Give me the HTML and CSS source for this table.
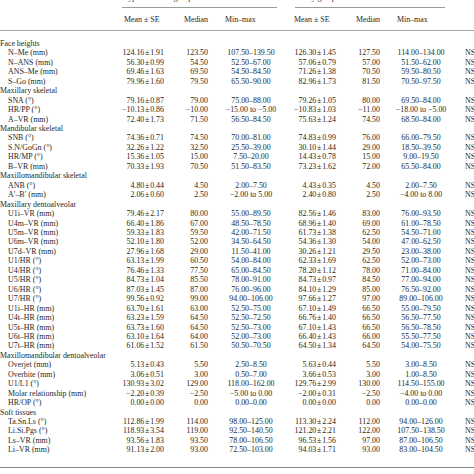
FILE: index.html
```html
<!DOCTYPE html>
<html>
<head>
<meta charset="utf-8">
<link rel="stylesheet" href="styles.css">
</head>
<body>
<div class="page">
<table class="tbl">
<colgroup>
<col class="c-lab"><col class="c-mean"><col class="c-med"><col class="c-rng"><col class="c-mean2"><col class="c-med"><col class="c-rng2"><col class="c-p">
</colgroup>
<thead>
<tr class="grp">
<th></th>
<th colspan="3"><div class="gline g1">Typical normal group</div></th>
<th colspan="3"><div class="gline g2">Study group</div></th>
<th></th>
</tr>
<tr class="cols">
<th></th>
<th class="h-mean">Mean ± SE</th>
<th class="h-med">Median</th>
<th class="h-rng">Min–max</th>
<th class="h-mean">Mean ± SE</th>
<th class="h-med">Median</th>
<th class="h-rng">Min–max</th>
<th class="h-p"></th>
</tr>
</thead>
<tbody>
<tr class="sec first"><td colspan="8">Face heights</td></tr>
<tr><td class="lab">N–Me (mm)</td><td class="m">124.16 ± 1.91</td><td class="md">123.50</td><td class="r">107.50–139.50</td><td class="m">126.30 ± 1.45</td><td class="md">127.50</td><td class="r">114.00–134.00</td><td class="p">NS</td></tr>
<tr><td class="lab">N–ANS (mm)</td><td class="m">56.30 ± 0.99</td><td class="md">54.50</td><td class="r">52.50–67.00</td><td class="m">57.06 ± 0.79</td><td class="md">57.00</td><td class="r">51.50–62.00</td><td class="p">NS</td></tr>
<tr><td class="lab">ANS–Me (mm)</td><td class="m">69.46 ± 1.63</td><td class="md">69.50</td><td class="r">54.50–84.50</td><td class="m">71.26 ± 1.38</td><td class="md">70.50</td><td class="r">59.50–80.50</td><td class="p">NS</td></tr>
<tr><td class="lab">S–Go (mm)</td><td class="m">79.96 ± 1.60</td><td class="md">79.50</td><td class="r">65.50–90.00</td><td class="m">82.96 ± 1.73</td><td class="md">81.50</td><td class="r">70.50–97.50</td><td class="p">NS</td></tr>
<tr class="sec"><td colspan="8">Maxillary skeletal</td></tr>
<tr><td class="lab">SNA (°)</td><td class="m">79.16 ± 0.87</td><td class="md">79.00</td><td class="r">75.00–88.00</td><td class="m">79.26 ± 1.05</td><td class="md">80.00</td><td class="r">69.50–84.00</td><td class="p">NS</td></tr>
<tr><td class="lab">HR/PP (°)</td><td class="m">−10.13 ± 0.86</td><td class="md">−10.00</td><td class="r">−15.00 to −5.00</td><td class="m">−10.83 ± 1.03</td><td class="md">−11.00</td><td class="r">−18.00 to −5.00</td><td class="p">NS</td></tr>
<tr><td class="lab">A–VR (mm)</td><td class="m">72.40 ± 1.73</td><td class="md">71.50</td><td class="r">56.50–84.50</td><td class="m">75.63 ± 1.24</td><td class="md">74.50</td><td class="r">68.50–84.00</td><td class="p">NS</td></tr>
<tr class="sec"><td colspan="8">Mandibular skeletal</td></tr>
<tr><td class="lab">SNB (°)</td><td class="m">74.36 ± 0.71</td><td class="md">74.50</td><td class="r">70.00–81.00</td><td class="m">74.83 ± 0.99</td><td class="md">76.00</td><td class="r">66.00–79.50</td><td class="p">NS</td></tr>
<tr><td class="lab">S.N/GoGn (°)</td><td class="m">32.26 ± 1.22</td><td class="md">32.50</td><td class="r">25.50–39.00</td><td class="m">30.10 ± 1.44</td><td class="md">29.00</td><td class="r">18.50–39.50</td><td class="p">NS</td></tr>
<tr><td class="lab">HR/MP (°)</td><td class="m">15.36 ± 1.05</td><td class="md">15.00</td><td class="r">7.50–20.00</td><td class="m">14.43 ± 0.78</td><td class="md">15.00</td><td class="r">9.00–19.50</td><td class="p">NS</td></tr>
<tr><td class="lab">B–VR (mm)</td><td class="m">70.33 ± 1.93</td><td class="md">70.50</td><td class="r">51.50–83.50</td><td class="m">73.23 ± 1.62</td><td class="md">72.00</td><td class="r">65.50–84.00</td><td class="p">NS</td></tr>
<tr class="sec"><td colspan="8">Maxillomandibular skeletal</td></tr>
<tr><td class="lab">ANB (°)</td><td class="m">4.80 ± 0.44</td><td class="md">4.50</td><td class="r">2.00–7.50</td><td class="m">4.43 ± 0.35</td><td class="md">4.50</td><td class="r">2.00–7.50</td><td class="p">NS</td></tr>
<tr><td class="lab">A′–B′ (mm)</td><td class="m">2.06 ± 0.60</td><td class="md">2.50</td><td class="r">−2.00 to 5.00</td><td class="m">2.40 ± 0.80</td><td class="md">2.50</td><td class="r">−4.00 to 8.00</td><td class="p">NS</td></tr>
<tr class="sec"><td colspan="8">Maxillary dentoalveolar</td></tr>
<tr><td class="lab">U1i–VR (mm)</td><td class="m">79.46 ± 2.17</td><td class="md">80.00</td><td class="r">55.00–89.50</td><td class="m">82.56 ± 1.46</td><td class="md">83.00</td><td class="r">76.00–93.50</td><td class="p">NS</td></tr>
<tr><td class="lab">U4m–VR (mm)</td><td class="m">66.40 ± 1.86</td><td class="md">67.00</td><td class="r">48.50–78.50</td><td class="m">68.96 ± 1.40</td><td class="md">69.00</td><td class="r">61.00–78.50</td><td class="p">NS</td></tr>
<tr><td class="lab">U5m–VR (mm)</td><td class="m">59.33 ± 1.83</td><td class="md">59.50</td><td class="r">42.00–71.50</td><td class="m">61.73 ± 1.38</td><td class="md">62.50</td><td class="r">54.50–71.00</td><td class="p">NS</td></tr>
<tr><td class="lab">U6m–VR (mm)</td><td class="m">52.10 ± 1.80</td><td class="md">52.00</td><td class="r">34.50–64.50</td><td class="m">54.36 ± 1.30</td><td class="md">54.00</td><td class="r">47.00–62.50</td><td class="p">NS</td></tr>
<tr><td class="lab">U7d–VR (mm)</td><td class="m">27.96 ± 1.68</td><td class="md">29.00</td><td class="r">11.50–41.00</td><td class="m">30.26 ± 1.21</td><td class="md">29.50</td><td class="r">23.00–38.00</td><td class="p">NS</td></tr>
<tr><td class="lab">U1/HR (°)</td><td class="m">63.13 ± 1.99</td><td class="md">60.50</td><td class="r">54.00–84.00</td><td class="m">62.33 ± 1.69</td><td class="md">62.50</td><td class="r">52.00–73.00</td><td class="p">NS</td></tr>
<tr><td class="lab">U4/HR (°)</td><td class="m">76.46 ± 1.33</td><td class="md">77.50</td><td class="r">65.00–84.50</td><td class="m">78.20 ± 1.12</td><td class="md">78.00</td><td class="r">71.00–84.00</td><td class="p">NS</td></tr>
<tr><td class="lab">U5/HR (°)</td><td class="m">84.73 ± 1.04</td><td class="md">85.50</td><td class="r">78.00–91.00</td><td class="m">84.73 ± 0.97</td><td class="md">84.50</td><td class="r">77.00–94.00</td><td class="p">NS</td></tr>
<tr><td class="lab">U6/HR (°)</td><td class="m">87.03 ± 1.45</td><td class="md">87.00</td><td class="r">76.00–96.00</td><td class="m">84.10 ± 1.29</td><td class="md">85.00</td><td class="r">76.50–92.00</td><td class="p">NS</td></tr>
<tr><td class="lab">U7/HR (°)</td><td class="m">99.56 ± 0.92</td><td class="md">99.00</td><td class="r">94.00–106.00</td><td class="m">97.66 ± 1.27</td><td class="md">97.00</td><td class="r">89.00–106.00</td><td class="p">NS</td></tr>
<tr><td class="lab">U1i–HR (mm)</td><td class="m">63.70 ± 1.61</td><td class="md">63.00</td><td class="r">52.50–75.00</td><td class="m">67.10 ± 1.49</td><td class="md">66.50</td><td class="r">55.00–79.50</td><td class="p">NS</td></tr>
<tr><td class="lab">U4t–HR (mm)</td><td class="m">63.23 ± 1.59</td><td class="md">64.50</td><td class="r">52.50–72.50</td><td class="m">66.76 ± 1.40</td><td class="md">66.50</td><td class="r">56.50–77.50</td><td class="p">NS</td></tr>
<tr><td class="lab">U5t–HR (mm)</td><td class="m">63.73 ± 1.60</td><td class="md">64.50</td><td class="r">52.50–73.00</td><td class="m">67.10 ± 1.43</td><td class="md">66.50</td><td class="r">56.50–78.50</td><td class="p">NS</td></tr>
<tr><td class="lab">U6t–HR (mm)</td><td class="m">63.10 ± 1.64</td><td class="md">64.00</td><td class="r">52.00–73.00</td><td class="m">66.40 ± 1.43</td><td class="md">66.00</td><td class="r">55.50–77.50</td><td class="p">NS</td></tr>
<tr><td class="lab">U7t–HR (mm)</td><td class="m">61.06 ± 1.52</td><td class="md">61.50</td><td class="r">50.50–70.50</td><td class="m">64.50 ± 1.34</td><td class="md">64.50</td><td class="r">54.00–75.50</td><td class="p">NS</td></tr>
<tr class="sec"><td colspan="8">Maxillomandibular dentoalveolar</td></tr>
<tr><td class="lab">Overjet (mm)</td><td class="m">5.13 ± 0.43</td><td class="md">5.50</td><td class="r">2.50–8.50</td><td class="m">5.63 ± 0.44</td><td class="md">5.50</td><td class="r">3.00–8.50</td><td class="p">NS</td></tr>
<tr><td class="lab">Overbite (mm)</td><td class="m">3.06 ± 0.51</td><td class="md">3.00</td><td class="r">0.50–7.00</td><td class="m">3.66 ± 0.53</td><td class="md">3.00</td><td class="r">1.00–8.50</td><td class="p">NS</td></tr>
<tr><td class="lab">U1/L1 (°)</td><td class="m">130.93 ± 3.02</td><td class="md">129.00</td><td class="r">118.00–162.00</td><td class="m">129.76 ± 2.99</td><td class="md">130.00</td><td class="r">114.50–155.00</td><td class="p">NS</td></tr>
<tr><td class="lab">Molar relationship (mm)</td><td class="m">−2.20 ± 0.39</td><td class="md">−2.50</td><td class="r">−5.00 to 0.00</td><td class="m">−2.00 ± 0.31</td><td class="md">−2.50</td><td class="r">−4.00 to 0.00</td><td class="p">NS</td></tr>
<tr><td class="lab">HR/OP (°)</td><td class="m">0.00 ± 0.00</td><td class="md">0.00</td><td class="r">0.00–0.00</td><td class="m">0.00 ± 0.00</td><td class="md">0.00</td><td class="r">0.00–0.00</td><td class="p">NS</td></tr>
<tr class="sec"><td colspan="8">Soft tissues</td></tr>
<tr><td class="lab">Ta.Sn.Ls (°)</td><td class="m">112.86 ± 1.99</td><td class="md">114.00</td><td class="r">98.00–125.00</td><td class="m">113.30 ± 2.24</td><td class="md">112.00</td><td class="r">94.00–126.00</td><td class="p">NS</td></tr>
<tr><td class="lab">Li.Si.Pgs (°)</td><td class="m">118.93 ± 3.54</td><td class="md">119.00</td><td class="r">92.50–140.50</td><td class="m">121.20 ± 2.21</td><td class="md">122.00</td><td class="r">107.50–138.50</td><td class="p">NS</td></tr>
<tr><td class="lab">Ls–VR (mm)</td><td class="m">93.56 ± 1.83</td><td class="md">93.50</td><td class="r">78.00–106.50</td><td class="m">96.53 ± 1.56</td><td class="md">97.00</td><td class="r">87.00–106.50</td><td class="p">NS</td></tr>
<tr class="last"><td class="lab">Li–VR (mm)</td><td class="m">91.13 ± 2.00</td><td class="md">93.00</td><td class="r">72.50–103.00</td><td class="m">94.03 ± 1.71</td><td class="md">93.00</td><td class="r">83.00–104.50</td><td class="p">NS</td></tr>
</tbody>
</table>
</div>
</body>
</html>
```
FILE: styles.css
```css
html, body {
  margin: 0;
  padding: 0;
  background: #ffffff;
  overflow: hidden;
}
body {
  width: 474px;
  height: 474px;
}
.page {
  margin-top: -7.5px;
  color: #1f1f1f;
  font-family: "Liberation Serif", "Times New Roman", serif;
  font-size: 7.9px;
}
.tbl {
  width: 486px;
  table-layout: fixed;
  border-collapse: collapse;
  border-spacing: 0;
}
.c-lab { width: 118px; }
.c-mean { width: 52px; }
.c-med { width: 44px; }
.c-rng { width: 74px; }
.c-mean2 { width: 54px; }
.c-rng2 { width: 70px; }
.c-p { width: 30px; }
th, td {
  padding: 0;
  font-weight: normal;
  line-height: 9.45px;
  white-space: nowrap;
  overflow: visible;
}
.grp th {
  padding-bottom: 2px;
  text-align: left;
}
.gline {
  border-bottom: 1px solid #9a9a9a;
  padding-left: 2px;
  padding-bottom: 5px;
}
.g1 { margin-left: 4px; margin-right: 11px; }
.g2 { margin-left: 7px; margin-right: 11px; }
.cols th {
  padding-top: 5.5px;
  padding-bottom: 5px;
  border-bottom: 1.5px solid #a8a8a8;
}
.h-mean { text-align: left; padding-left: 6px; }
.h-med { text-align: right; padding-right: 6px; }
.h-rng { text-align: left; padding-left: 11px; }
.h-p { text-align: left; padding-left: 9px; }
.sec td {
  padding-left: 0;
  text-align: left;
}
.first td {
  padding-top: 8px;
}
.lab {
  padding-left: 8px;
  text-align: left;
}
.m {
  text-align: right;
  padding-right: 6px;
  word-spacing: -1.2px;
}
.md {
  text-align: right;
  padding-right: 6px;
}
.r {
  text-align: center;
}
.p {
  text-align: left;
  padding-left: 9px;
}
.last td {
  padding-bottom: 12px;
  border-bottom: 1.5px solid #8a8a8a;
}
```
